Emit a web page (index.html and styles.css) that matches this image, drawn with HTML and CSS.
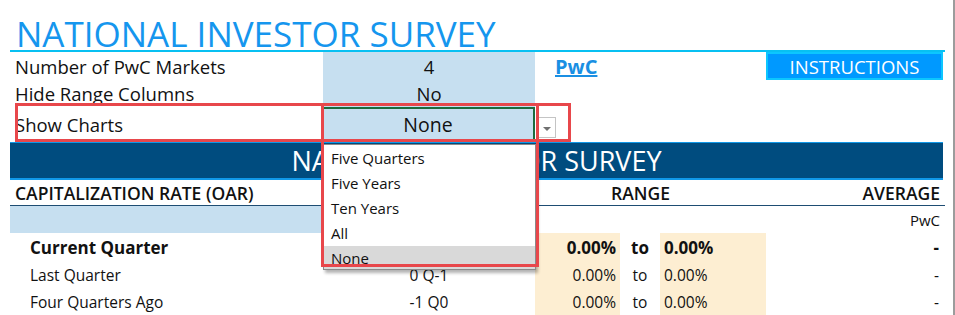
FILE: index.html
```html
<!DOCTYPE html>
<html lang="en">

<head>
    <meta charset="UTF-8">
    <meta name="viewport" content="width=device-width, initial-scale=1.0">
    <title>National Investor Survey</title>
    <link rel="stylesheet" href="styles.css">
</head>

<body>
    <div class="window">
        <div class="sheet">
            <div class="title">NATIONAL INVESTOR SURVEY</div>

            <div class="label">Number of PwC Markets</div>
            <div class="value">4</div>
            <div class="link-cell"><a href="#">PwC</a></div>
            <div class="instructions">INSTRUCTIONS</div>

            <div class="label">Hide Range Columns</div>
            <div class="value">No</div>
            <div class="fill"></div>

            <div class="label">Show Charts</div>
            <div class="value selected">None</div>
            <div class="fill"></div>

            <div class="band">NATIONAL INVESTOR SURVEY</div>

            <div class="head head-label">CAPITALIZATION RATE (OAR)</div>
            <div class="head"></div>
            <div class="head head-range">RANGE</div>
            <div class="head head-avg">AVERAGE</div>

            <div class="sub-blue"></div>
            <div class="sub-empty"></div>
            <div class="sub-pwc">PwC</div>

            <div class="row-label bold">Current Quarter</div>
            <div class="row-q"></div>
            <div class="lo bold">0.00%</div>
            <div class="to bold">to</div>
            <div class="hi bold">0.00%</div>
            <div class="avg bold">-</div>

            <div class="row-label">Last Quarter</div>
            <div class="row-q">0 Q-1</div>
            <div class="lo">0.00%</div>
            <div class="to">to</div>
            <div class="hi">0.00%</div>
            <div class="avg">-</div>

            <div class="row-label">Four Quarters Ago</div>
            <div class="row-q">-1 Q0</div>
            <div class="lo">0.00%</div>
            <div class="to">to</div>
            <div class="hi">0.00%</div>
            <div class="avg">-</div>
        </div>

        <!-- open data validation list -->
        <div class="drop-btn"><span class="caret"></span></div>
        <ul class="drop-list">
            <li>Five Quarters</li>
            <li>Five Years</li>
            <li>Ten Years</li>
            <li>All</li>
            <li class="hover">None</li>
        </ul>

        <!-- annotation boxes -->
        <div class="mark mark-row"></div>
        <div class="mark mark-col"></div>
    </div>
</body>

</html>
```

FILE: styles.css
```css
body {
    margin: 0;
    background: white;
    font-family: "Open Sans", "Noto Sans", sans-serif;
    color: #111;
}

.window {
    position: relative;
    width: 953px;
    height: 315px;
    overflow: hidden;
    border-right: 2px solid #9c9c9c;
}

.sheet {
    margin-left: 10px;
    display: grid;
    width: 935px;
    grid-template-columns: 313px 212px 85px 40px 106px 179px;
    grid-template-rows: 52px 28px 27px 34px 39px 26px 27px 28px 27px 27px;
}

.title {
    grid-column: 1 / 7;
    font-size: 35px;
    line-height: 35px;
    padding-top: 16px;
    color: #1596ee;
    padding-left: 6px;
    border-bottom: 2px solid #08c0f2;
    box-sizing: border-box;
    white-space: nowrap;
}

.label {
    grid-column: 1;
    font-size: 18.5px;
    padding-left: 5px;
    display: flex;
    align-items: center;
}

.value {
    grid-column: 2;
    background: #c6dff0;
    font-size: 18.5px;
    display: flex;
    align-items: center;
    justify-content: center;
}

.value.selected {
    font-size: 19.5px;
    margin-bottom: 2px;
    border-top: 2px solid #1d6b3d;
    border-right: 2px solid #1d6b3d;
}

.link-cell {
    grid-column: 3 / 6;
    padding-left: 20px;
    display: flex;
    align-items: center;
}

.link-cell a {
    color: #1a8fe3;
    font-weight: 700;
    font-size: 20px;
}

.fill {
    grid-column: 3 / 7;
}

.instructions {
    grid-column: 6;
    background: #0099ff;
    border: 2px solid #0cc6ff;
    margin-right: 2px;
    color: white;
    font-size: 18.5px;
    display: flex;
    align-items: center;
    justify-content: center;
}

.band {
    grid-column: 1 / 7;
    margin-top: 1px;
    background: #004c7f;
    border-top: 1px solid #1098e8;
    border-bottom: 2px solid #1098e8;
    color: white;
    font-size: 27px;
    display: flex;
    align-items: center;
    justify-content: center;
    margin-right: 2px;
}

.head {
    border-bottom: 1px solid #1e4d73;
    font-weight: 600;
    font-size: 17.5px;
    display: flex;
    align-items: center;
}

.head-label {
    padding-left: 5px;
}

.head-range {
    grid-column: 3 / 6;
    justify-content: center;
    padding-right: 20px;
}

.head-avg {
    justify-content: flex-end;
    padding-right: 5px;
}

.sub-blue {
    grid-column: 1 / 3;
    background: #c6dff0;
}

.sub-empty {
    grid-column: 3 / 6;
}

.sub-pwc {
    font-size: 15px;
    text-align: right;
    padding-right: 5px;
    padding-top: 4px;
}

.row-label,
.row-q,
.lo,
.to,
.hi,
.avg {
    font-size: 15.5px;
    display: flex;
    align-items: center;
    padding-top: 1px;
}

.row-label {
    padding-left: 20px;
}

.row-q {
    justify-content: center;
}

.lo {
    background: #fdeed2;
    justify-content: flex-end;
    padding-right: 4px;
}

.to {
    justify-content: center;
}

.hi {
    background: #fdeed2;
    padding-left: 4px;
}

.avg {
    justify-content: flex-end;
    padding-right: 6px;
}

.bold {
    font-weight: 700;
    font-size: 17px;
}

.drop-btn {
    position: absolute;
    left: 537px;
    top: 117px;
    width: 19px;
    height: 21px;
    background: white;
    border: 1px solid #c4c4c4;
    box-sizing: border-box;
    display: flex;
    align-items: center;
    justify-content: center;
}

.caret {
    width: 0;
    height: 0;
    border-left: 4px solid transparent;
    border-right: 4px solid transparent;
    border-top: 4px solid #707070;
    margin-top: 2px;
}

.drop-list {
    position: absolute;
    left: 323px;
    top: 144px;
    width: 213px;
    height: 126px;
    margin: 0;
    padding: 1px 0 0;
    list-style: none;
    background: white;
    border: 1px solid #8a8a8a;
    box-sizing: border-box;
    box-shadow: 2px 3px 3px rgba(0, 0, 0, 0.3);
    overflow: hidden;
}

.drop-list li {
    height: 25px;
    line-height: 25px;
    padding-left: 7px;
    font-size: 15px;
}

.drop-list li.hover {
    background: #d9d9d9;
}

.mark {
    position: absolute;
    border: 3px solid #e8474b;
    box-sizing: border-box;
}

.mark-row {
    left: 15px;
    top: 103px;
    width: 556px;
    height: 39px;
}

.mark-col {
    left: 321px;
    top: 103px;
    width: 218px;
    height: 164px;
}
```
